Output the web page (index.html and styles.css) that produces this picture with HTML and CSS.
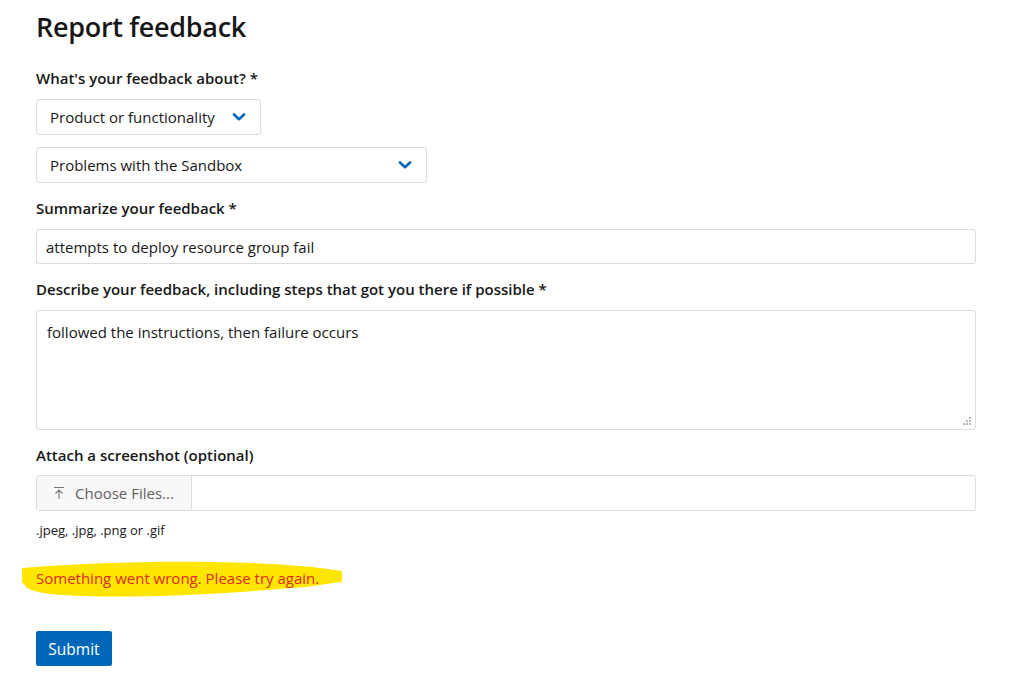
FILE: index.html
```html
<!DOCTYPE html>
<html lang="en">
<head>
<meta charset="utf-8">
<title>Report feedback</title>
<link rel="stylesheet" href="styles.css">
</head>
<body>
<main class="page">
  <h1 class="title">Report feedback</h1>

  <div class="field">
    <div class="label">What's your feedback about? *</div>
    <div class="select select-short">
      <span>Product or functionality</span>
      <svg class="chev" viewBox="0 0 14 10" width="14" height="10"><path d="M2 2.5 L7 7.2 L12 2.5" fill="none" stroke="#0067b8" stroke-width="2.6" stroke-linecap="round" stroke-linejoin="round"/></svg>
    </div>
    <div class="select select-long">
      <span>Problems with the Sandbox</span>
      <svg class="chev" viewBox="0 0 14 10" width="14" height="10"><path d="M2 2.5 L7 7.2 L12 2.5" fill="none" stroke="#0067b8" stroke-width="2.6" stroke-linecap="round" stroke-linejoin="round"/></svg>
    </div>
  </div>

  <div class="field">
    <div class="label">Summarize your feedback *</div>
    <div class="input">attempts to deploy resource group fail</div>
  </div>

  <div class="field">
    <div class="label">Describe your feedback, including steps that got you there if possible *</div>
    <div class="textarea">
      <span>followed the instructions, then failure occurs</span>
      <svg class="grip" viewBox="0 0 9 9" width="9" height="9"><g fill="#b5b5b5"><rect x="6" y="0" width="2" height="2"/><rect x="3" y="3" width="2" height="2"/><rect x="6" y="3" width="2" height="2"/><rect x="0" y="6" width="2" height="2"/><rect x="3" y="6" width="2" height="2"/><rect x="6" y="6" width="2" height="2"/></g></svg>
    </div>
  </div>

  <div class="field">
    <div class="label label-file">Attach a screenshot (optional)</div>
    <div class="file">
      <div class="file-btn">
        <svg class="upload" viewBox="0 0 12 14" width="12" height="14"><path d="M1 1.5 H11 M6 4 V13 M2.5 7.5 L6 4 L9.5 7.5" fill="none" stroke="#777" stroke-width="1.1"/></svg>
        <span>Choose Files...</span>
      </div>
    </div>
    <div class="hint">.jpeg, .jpg, .png or .gif</div>
  </div>

  <div class="error-wrap">
    <svg class="highlight" viewBox="0 0 322 38" width="322" height="38"><path d="M0 8 C60 3 130 1 190 2 C250 3 290 6 320 11 L320 22 C300 24 290 27 270 28 C200 34 130 38 60 36 C30 35 15 33 5 28 L0 22 Z" fill="#ffe600"/></svg>
    <span class="error">Something went wrong. Please try again.</span>
  </div>

  <button class="submit" type="button">Submit</button>
</main>
</body>
</html>
```

FILE: styles.css
```css
* { box-sizing: border-box; }
html, body { margin: 0; padding: 0; background: #fff; }
body {
  font-family: "Open Sans", "Noto Sans", "Liberation Sans", sans-serif;
  color: #171717;
}
.page {
  width: 976px;
  padding: 8px 0 0 36px;
  display: flex;
  flex-direction: column;
}
.title {
  margin: 0;
  font-size: 27px;
  font-weight: 600;
  line-height: 38px;
  letter-spacing: -0.3px;
  color: #171717;
}
.field {
  display: flex;
  flex-direction: column;
}
.label {
  font-size: 15px;
  font-weight: 600;
  line-height: 20px;
  margin-top: 15px;
  margin-bottom: 11px;
}
.title + .field .label { margin-top: 22px; }
.label-file { margin-bottom: 10px; }
.select {
  display: flex;
  align-items: center;
  justify-content: space-between;
  height: 36px;
  border: 1px solid #dcdcdc;
  border-radius: 3px;
  padding: 0 14px 0 13px;
  font-size: 15px;
  color: #171717;
  background: #fff;
}
.select-short { width: 225px; }
.select-long { width: 391px; margin-top: 12px; }
.chev { display: block; }
.input {
  height: 35px;
  border: 1px solid #dcdcdc;
  border-radius: 3px;
  display: flex;
  align-items: center;
  padding: 0 9px;
  font-size: 15px;
}
.textarea {
  position: relative;
  height: 120px;
  border: 1px solid #dcdcdc;
  border-radius: 3px;
  padding: 11px 10px;
  font-size: 15px;
}
.grip { position: absolute; right: 3px; bottom: 3px; }
.file {
  height: 36px;
  border: 1px solid #dcdcdc;
  border-radius: 3px;
  display: flex;
}
.file-btn {
  width: 155px;
  background: #f8f8f8;
  border-right: 1px solid #dcdcdc;
  display: flex;
  align-items: center;
  gap: 10px;
  padding-left: 16px;
  font-size: 15px;
  color: #616161;
}
.upload { display: block; }
.hint {
  font-size: 13px;
  margin-top: 10px;
  line-height: 18px;
}
.error-wrap {
  position: relative;
  margin-top: 27px;
  height: 24px;
  display: flex;
  align-items: center;
}
.highlight {
  position: absolute;
  left: -14px;
  top: -6px;
}
.error {
  position: relative;
  font-size: 15px;
  color: #dd2a1a;
}
.submit {
  margin-top: 41px;
  width: 76px;
  height: 35px;
  border: none;
  border-radius: 2px;
  background: #0067b8;
  color: #fff;
  font-family: inherit;
  font-size: 15.5px;
  padding: 0;
}
```
